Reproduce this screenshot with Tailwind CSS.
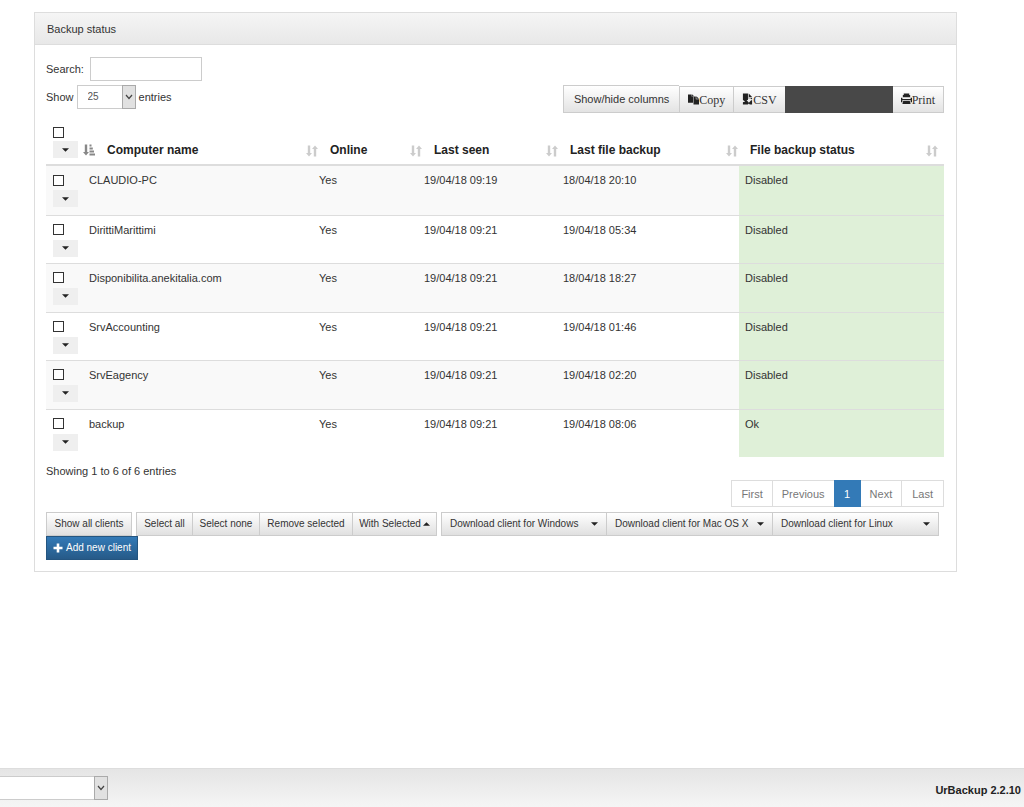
<!DOCTYPE html>
<html lang="en">
<head>
    <meta charset="UTF-8">
    <meta name="viewport" content="width=device-width, initial-scale=1.0">
    <title>UrBackup - Backup status</title>
    <script src="https://cdn.jsdelivr.net/npm/@tailwindcss/browser@4"></script>
</head>
<body class="min-h-screen flex flex-col bg-white text-[#333] text-[11px] leading-4 font-['Liberation_Sans',Arial,sans-serif]">
    <!-- icon sprite -->
    <svg class="hidden">
        <symbol id="caret-down" viewBox="0 0 8 4"><path d="M0 0h8L4 4z"/></symbol>
        <symbol id="caret-up" viewBox="0 0 8 4"><path d="M0 4h8L4 0z"/></symbol>
        <symbol id="chevron" viewBox="0 0 8 8"><path d="M1 2l3 3.5L7 2" fill="none" stroke="#444" stroke-width="1.2"/></symbol>
        <symbol id="sort" viewBox="0 0 12 12"><path d="M1.800 0.500h2.400V8H6L3 11.500 0 8h1.800zM7.800 11.500h2.400V4H12L9 0.500 6 4h1.800z"/></symbol>
        <symbol id="sort-asc" viewBox="0 0 12 12"><path d="M1.800 0.500h2.400V8H6L3 11.500 0 8h1.800zM6.500 0.500h2v2h-2zM6.500 3.500h3.300v2H6.500zM6.500 6.500H11v2H6.500zM6.500 9.500H12v2H6.500z"/></symbol>
        <symbol id="copy" viewBox="0 0 12 12"><path d="M0 1h4v2.200h1.500V10H0zM4.500 0.800L6.600 2.900H4.500zM6 3.300h2.500v3H12V12H6zM9 3l3 2.800H9z"/></symbol>
        <symbol id="csv" viewBox="0 0 12 12"><path d="M1 0h5.500v4.500H11v2L9 5.200H6.500v2H5L7.500 10 10 7.300h1V12H8.500l-1-1.200L6.300 12H1V9.500l2.500-.8L1 7zM7.300 0L11 3.700H7.300z"/></symbol>
        <symbol id="print" viewBox="0 0 12 12"><path d="M3 0h6v1.500h1V4H2V1.500h1zM0 4.500h1.500v1.500h9V4.500H12V9.500h-1.500V7h-9v2.500H0zM2.500 8h7l1 3.500h-9z"/></symbol>
        <symbol id="plus" viewBox="0 0 10 10"><path d="M3.700 0.500h2.600v3.200h3.200v2.600H6.300v3.200H3.700V6.300H0.500V3.700h3.200z"/></symbol>
    </svg>

    <main class="ml-[34px] mr-[67px] mt-3 mb-6 border border-[#ddd]">
        <h1 class="h-8 px-3 flex items-center border-b border-[#ddd] bg-linear-to-b from-[#f5f5f5] to-[#e8e8e8]">Backup status</h1>

        <div class="p-3 pl-[11px] pb-[11px]">
            <!-- filter + export tools -->
            <div class="flex items-center gap-1.5">
                <label for="search">Search:</label>
                <input id="search" type="text" class="w-28 h-6 px-2 border border-[#ccc] outline-none">
            </div>
            <div class="flex justify-between items-start mt-1">
                <div class="flex items-center gap-[3px]">
                    <label for="length">Show</label>
                    <div class="relative">
                        <select id="length" class="appearance-none block w-[59px] h-6 pl-[10px] text-[10px] text-[#555] bg-white border border-[#ccc]">
                            <option>10</option>
                            <option selected>25</option>
                            <option>50</option>
                            <option>100</option>
                        </select>
                        <span class="absolute right-0 top-0 w-[14px] h-6 flex items-center justify-center border border-[#aaa] bg-[#e1e1e1] pointer-events-none"><svg class="w-2 h-2"><use href="#chevron"/></svg></span>
                    </div>
                    <span>entries</span>
                </div>
                <div class="flex items-end h-7">
                    <button class="h-7 px-[10px] pb-px border border-r-0 border-[#ccc] bg-linear-to-b from-white to-[#e3e3e3]">Show/hide columns</button>
                    <button class="h-[27px] px-2 flex items-center border border-[#ccc] bg-linear-to-b from-white to-[#e3e3e3] font-['Liberation_Serif',serif] text-xs"><svg class="w-[11px] h-3 mb-0.5 fill-[#222]"><use href="#copy"/></svg>Copy</button>
                    <button class="h-[27px] px-2 flex items-center border border-x-0 border-[#ccc] bg-linear-to-b from-white to-[#e3e3e3] font-['Liberation_Serif',serif] text-xs"><svg class="w-[11px] h-3 mb-0.5 fill-[#222]"><use href="#csv"/></svg>CSV</button>
                    <button aria-label="PDF" class="w-[108px] h-[27px] bg-[#484848]"></button>
                    <button class="h-[27px] px-2 flex items-center border border-l-0 border-[#ccc] bg-linear-to-b from-white to-[#e3e3e3] font-['Liberation_Serif',serif] text-xs"><svg class="w-[11px] h-3 mb-0.5 fill-[#222]"><use href="#print"/></svg>Print</button>
                </div>
            </div>

            <!-- head and body are sized separately -->
            <table class="block mt-1">
                <thead class="table table-fixed w-full border-b-2 border-[#ddd] text-xs leading-[17px] text-[#222]">
                    <tr class="text-left align-bottom">
                        <th class="w-[49px] pl-[7px] pt-1.5 pb-1.5">
                            <div class="h-[18px] flex items-center"><input type="checkbox" aria-label="Select all clients" class="appearance-none w-[11px] h-[11px] border border-[#333] bg-white"></div>
                            <div class="flex items-center justify-between">
                                <button aria-label="Actions" class="w-[25px] h-[17px] flex items-center justify-center bg-[#efefef]"><svg class="w-[7px] h-1 fill-[#222]"><use href="#caret-down"/></svg></button>
                                <svg class="w-3 h-3 fill-[#888]"><use href="#sort-asc"/></svg>
                            </div>
                        </th>
                        <th class="pl-3 pb-[5px]"><div class="flex items-center justify-between">Computer name<svg class="w-3 h-3 fill-[#ccc]"><use href="#sort"/></svg></div></th>
                        <th class="w-[104px] pl-3 pb-[5px]"><div class="flex items-center justify-between">Online<svg class="w-3 h-3 fill-[#ccc]"><use href="#sort"/></svg></div></th>
                        <th class="w-[136px] pl-3 pb-[5px]"><div class="flex items-center justify-between">Last seen<svg class="w-3 h-3 fill-[#ccc]"><use href="#sort"/></svg></div></th>
                        <th class="w-[180px] pl-3 pb-[5px]"><div class="flex items-center justify-between">Last file backup<svg class="w-3 h-3 fill-[#ccc]"><use href="#sort"/></svg></div></th>
                        <th class="w-[206px] pl-3 pr-1.5 pb-[5px]"><div class="flex items-center justify-between">File backup status<svg class="w-3 h-3 fill-[#ccc]"><use href="#sort"/></svg></div></th>
                    </tr>
                </thead>
                <tbody id="clients" class="table table-fixed w-full leading-[18px]"></tbody>
            </table>

            <p class="mt-1.5">Showing 1 to 6 of 6 entries</p>

            <nav class="flex justify-end mt-px text-[#777]">
                <a href="#" class="h-[27px] px-[9px] flex items-center border border-[#ddd]">First</a>
                <a href="#" class="h-[27px] px-[9px] flex items-center border border-x-0 border-[#ddd]">Previous</a>
                <a href="#" class="h-[27px] w-[27px] flex items-center justify-center border border-[#337ab7] bg-[#337ab7] text-white">1</a>
                <a href="#" class="h-[27px] px-[9px] flex items-center border border-l-0 border-[#ddd]">Next</a>
                <a href="#" class="h-[27px] px-[10px] flex items-center border border-l-0 border-[#ddd]">Last</a>
            </nav>

            <!-- client actions -->
            <div class="flex gap-1 mt-[5px] text-[10px] whitespace-nowrap">
                <button class="h-6 w-[86px] border border-[#ccc] bg-linear-to-b from-white to-[#e0e0e0]">Show all clients</button>
                <div class="flex">
                    <button class="h-6 w-[57px] border border-[#ccc] bg-linear-to-b from-white to-[#e0e0e0]">Select all</button>
                    <button class="h-6 w-[67px] border border-l-0 border-[#ccc] bg-linear-to-b from-white to-[#e0e0e0]">Select none</button>
                    <button class="h-6 w-[93px] border border-l-0 border-[#ccc] bg-linear-to-b from-white to-[#e0e0e0]">Remove selected</button>
                    <button class="h-6 w-[84px] flex items-center justify-center gap-0.5 border border-l-0 border-[#ccc] bg-linear-to-b from-white to-[#e0e0e0]">With Selected <svg class="w-[7px] h-1 fill-[#222]"><use href="#caret-up"/></svg></button>
                </div>
                <div class="flex">
                    <button class="h-6 w-[166px] px-2 flex items-center justify-between border border-[#ccc] bg-linear-to-b from-white to-[#e0e0e0]">Download client for Windows <svg class="w-[7px] h-1 fill-[#222]"><use href="#caret-down"/></svg></button>
                    <button class="h-6 w-[166px] px-2 flex items-center justify-between border border-l-0 border-[#ccc] bg-linear-to-b from-white to-[#e0e0e0]">Download client for Mac OS X <svg class="w-[7px] h-1 fill-[#222]"><use href="#caret-down"/></svg></button>
                    <button class="h-6 w-[166px] px-2 flex items-center justify-between border border-l-0 border-[#ccc] bg-linear-to-b from-white to-[#e0e0e0]">Download client for Linux <svg class="w-[7px] h-1 fill-[#222]"><use href="#caret-down"/></svg></button>
                </div>
            </div>
            <button class="h-6 w-[92px] flex items-center justify-center gap-[3px] text-[10px] text-white border border-[#245580] bg-linear-to-b from-[#337ab7] to-[#265a88]"><svg class="w-[10px] h-[10px] fill-white"><use href="#plus"/></svg>Add new client</button>
        </div>
    </main>

    <footer class="mt-auto h-[39px] pr-[3px] flex items-center justify-between border-t border-[#ddd] bg-linear-to-b from-[#e5e5e5] to-[#f5f5f5]">
        <div class="relative">
            <select aria-label="Language" class="appearance-none block w-[108px] h-6 bg-white border border-l-0 border-[#ccc]"></select>
            <span class="absolute right-0 top-0 w-[14px] h-6 flex items-center justify-center border border-[#aaa] bg-[#e1e1e1] pointer-events-none"><svg class="w-2 h-2"><use href="#chevron"/></svg></span>
        </div>
        <b class="pt-1 text-[#222]">UrBackup 2.2.10</b>
    </footer>

    <script>
        const clients = [
            ['CLAUDIO-PC', 'Yes', '19/04/18 09:19', '18/04/18 20:10', 'Disabled'],
            ['DirittiMarittimi', 'Yes', '19/04/18 09:21', '19/04/18 05:34', 'Disabled'],
            ['Disponibilita.anekitalia.com', 'Yes', '19/04/18 09:21', '18/04/18 18:27', 'Disabled'],
            ['SrvAccounting', 'Yes', '19/04/18 09:21', '19/04/18 01:46', 'Disabled'],
            ['SrvEagency', 'Yes', '19/04/18 09:21', '19/04/18 02:20', 'Disabled'],
            ['backup', 'Yes', '19/04/18 09:21', '19/04/18 08:06', 'Ok']
        ];

        document.getElementById('clients').innerHTML = clients.map(c => `
            <tr class="h-12 odd:h-[49px] odd:bg-[#f9f9f9] last:bg-white align-top border-t border-[#ddd] first:border-t-0">
                <td class="w-[37px] pl-[7px] pt-[5px]">
                    <div class="h-[18px] flex items-center"><input type="checkbox" aria-label="Select ${c[0]}" class="appearance-none w-[11px] h-[11px] border border-[#333] bg-white"></div>
                    <button aria-label="Actions for ${c[0]}" class="w-[25px] h-[17px] mt-px flex items-center justify-center bg-[#efefef]"><svg class="w-[7px] h-1 fill-[#222]"><use href="#caret-down"/></svg></button>
                </td>
                <td class="pl-1.5 pt-[5px]">${c[0]}</td>
                <td class="w-[104px] pl-1.5 pt-[5px]">${c[1]}</td>
                <td class="w-[139px] pl-[7px] pt-[5px]">${c[2]}</td>
                <td class="w-[183px] pl-[7px] pt-[5px]">${c[3]}</td>
                <td class="w-[205px] pl-1.5 pt-[5px] bg-[#dff0d8]">${c[4]}</td>
            </tr>`).join('');
    </script>
</body>
</html>
